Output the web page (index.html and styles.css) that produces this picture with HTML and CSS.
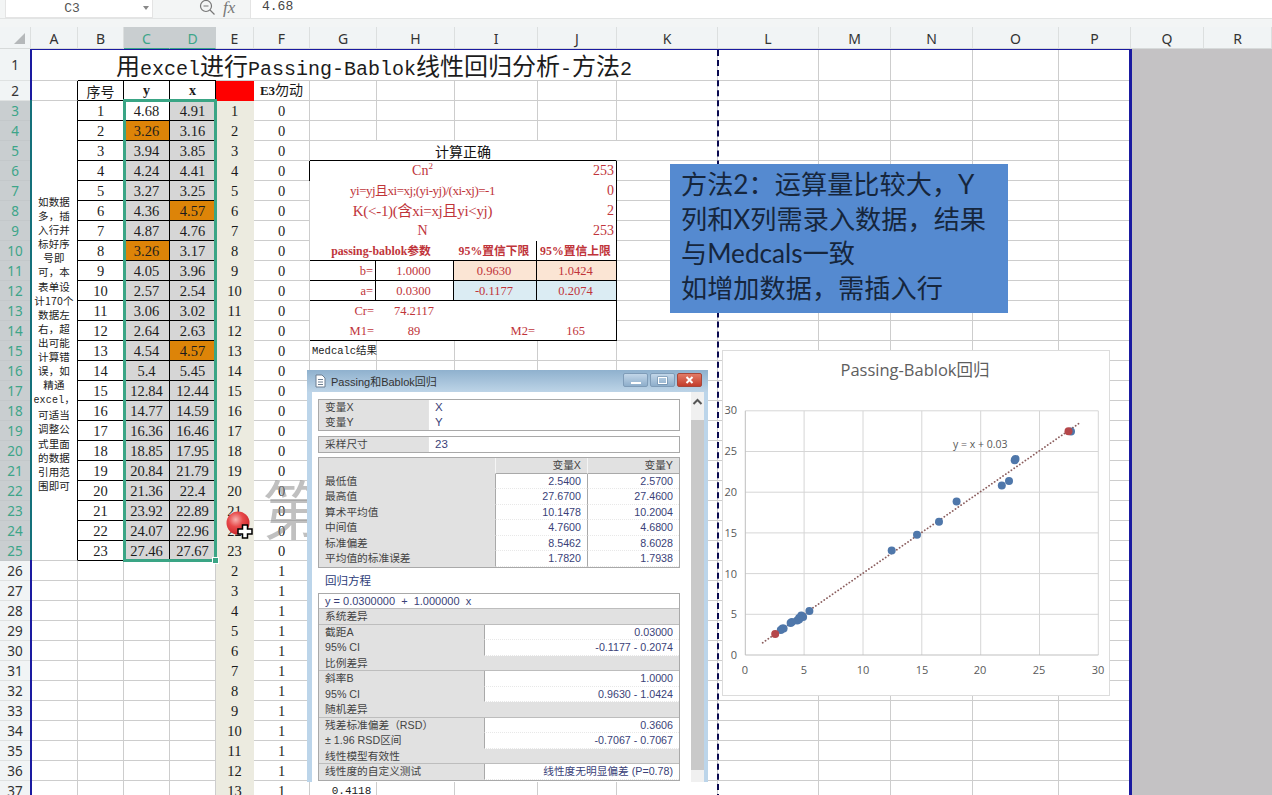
FILE: index.html
```html
<!DOCTYPE html>
<html lang="zh-CN">
<head>
<meta charset="utf-8">
<title>Passing-Bablok</title>
<link rel="stylesheet" href="styles.css">
</head>
<body>
<div class="fbar">
  <div class="fbar-top">
    <div class="namebox"><span class="nb-text">C3</span><span class="nb-caret"></span></div>
    <div class="fbar-icons">
      <svg class="zoom-ic" width="20" height="18" viewBox="0 0 20 18"><circle cx="8" cy="6" r="5.5" fill="none" stroke="#777" stroke-width="1.2"/><path d="M5.5 6h5M12 10l4.5 4.5" fill="none" stroke="#777" stroke-width="1.2"/></svg>
      <span class="fx">fx</span>
    </div>
    <div class="finput">4.68</div>
  </div>
  <div class="fbar-band"></div>
</div>

<table class="grid">
<colgroup>
<col class="w31"><col class="w47"><col class="w46"><col class="w46"><col class="w46"><col class="w38"><col class="w56"><col class="w67"><col class="w78"><col class="w83"><col class="w79"><col class="w101"><col class="w101"><col class="w72"><col class="w82"><col class="w86"><col class="w72"><col class="w73"><col class="w68">
</colgroup>
<thead>
<tr class="hd"><th class="corner"><span class="tri"></span></th><th>A</th><th>B</th><th class="csel">C</th><th class="csel">D</th><th>E</th><th>F</th><th>G</th><th>H</th><th>I</th><th>J</th><th>K</th><th>L</th><th>M</th><th>N</th><th>O</th><th>P</th><th>Q</th><th>R</th></tr>
</thead>
<tbody>
<tr class="r1"><th class="rh">1</th><td colspan="11" class="title">用<span class="lat">excel</span>进行<span class="lat">Passing-Bablok</span>线性回归分析<span class="lat">-</span>方法<span class="lat">2</span></td><td></td><td></td><td></td><td></td><td></td><td rowspan="37" colspan="2" class="off"></td></tr>
<tr><th class="rh">2</th><td class="edge"></td><td class="t cjk">序号</td><td class="t hb">y</td><td class="t hb">x</td><td class="red"></td><td class="f3"><b>E3</b>勿动</td><td></td><td></td><td></td><td></td><td></td><td></td><td></td><td></td><td></td><td></td></tr>
<tr><th class="rh sel">3</th><td rowspan="23" class="note edge">如数据<br>多，插<br>入行并<br>标好序<br>号即<br>可，本<br>表单设<br>计170个<br>数据左<br>右，超<br>出可能<br>计算错<br>误，如<br>精通<br><span class="nm">excel，</span><br>可适当<br>调整公<br>式里面<br>的数据<br>引用范<br>围即可</td><td class="t">1</td><td class="t">4.68</td><td class="t g">4.91</td><td class="e">1</td><td class="n">0</td><td></td><td></td><td></td><td></td><td></td><td></td><td></td><td></td><td></td><td></td></tr>
<tr><th class="rh sel">4</th><td class="t">2</td><td class="t o">3.26</td><td class="t g">3.16</td><td class="e">2</td><td class="n">0</td><td></td><td></td><td></td><td></td><td></td><td></td><td></td><td></td><td></td><td></td></tr>
<tr><th class="rh sel">5</th><td class="t">3</td><td class="t g">3.94</td><td class="t g">3.85</td><td class="e">3</td><td class="n">0</td><td colspan="4" class="calc-title">计算正确</td><td></td><td></td><td></td><td></td><td></td><td></td></tr>
<tr><th class="rh sel">6</th><td class="t">4</td><td class="t g">4.24</td><td class="t g">4.41</td><td class="e">4</td><td class="n">0</td><td colspan="4" rowspan="9" class="calc-box">
  <div class="calc">
    <div class="c3 s14">Cn<sup>2</sup></div><div class="rt s14">253</div>
    <div class="c3 s13n">yi=yj且xi=xj;(yi-yj)/(xi-xj)=-1</div><div class="rt s14">0</div>
    <div class="c3 s14k">K(&lt;-1)(含xi=xj且yi&lt;yj)</div><div class="rt s14">2</div>
    <div class="c3 s14">N</div><div class="rt s14">253</div>
    <div class="c2 hbold bb">passing-bablok参数</div><div class="hbold ctr br bb">95%置信下限</div><div class="hbold ctr bb">95%置信上限</div>
    <div class="rt v bb br">b=</div><div class="ctr v bb br">1.0000</div><div class="ctr v bb br pe">0.9630</div><div class="ctr v bb pe">1.0424</div>
    <div class="rt v bb br">a=</div><div class="ctr v bb br">0.0300</div><div class="ctr v bb br bl">-0.1177</div><div class="ctr v bb bl">0.2074</div>
    <div class="rt v">Cr=</div><div class="ctr v">74.2117</div><div></div><div></div>
    <div class="rt v">M1=</div><div class="ctr v">89</div><div class="rt v">M2=</div><div class="ctr v">165</div>
  </div>
</td><td></td><td></td><td></td><td></td><td></td><td></td></tr>
<tr><th class="rh sel">7</th><td class="t">5</td><td class="t g">3.27</td><td class="t g">3.25</td><td class="e">5</td><td class="n">0</td><td></td><td></td><td></td><td></td><td></td><td></td></tr>
<tr><th class="rh sel">8</th><td class="t">6</td><td class="t g">4.36</td><td class="t o">4.57</td><td class="e">6</td><td class="n">0</td><td></td><td></td><td></td><td></td><td></td><td></td></tr>
<tr><th class="rh sel">9</th><td class="t">7</td><td class="t g">4.87</td><td class="t g">4.76</td><td class="e">7</td><td class="n">0</td><td></td><td></td><td></td><td></td><td></td><td></td></tr>
<tr><th class="rh sel">10</th><td class="t">8</td><td class="t o">3.26</td><td class="t g">3.17</td><td class="e">8</td><td class="n">0</td><td></td><td></td><td></td><td></td><td></td><td></td></tr>
<tr><th class="rh sel">11</th><td class="t">9</td><td class="t g">4.05</td><td class="t g">3.96</td><td class="e">9</td><td class="n">0</td><td></td><td></td><td></td><td></td><td></td><td></td></tr>
<tr><th class="rh sel">12</th><td class="t">10</td><td class="t g">2.57</td><td class="t g">2.54</td><td class="e">10</td><td class="n">0</td><td></td><td></td><td></td><td></td><td></td><td></td></tr>
<tr><th class="rh sel">13</th><td class="t">11</td><td class="t g">3.06</td><td class="t g">3.02</td><td class="e">11</td><td class="n">0</td><td></td><td></td><td></td><td></td><td></td><td></td></tr>
<tr><th class="rh sel">14</th><td class="t">12</td><td class="t g">2.64</td><td class="t g">2.63</td><td class="e">12</td><td class="n">0</td><td></td><td></td><td></td><td></td><td></td><td></td></tr>
<tr><th class="rh sel">15</th><td class="t">13</td><td class="t g">4.54</td><td class="t o">4.57</td><td class="e">13</td><td class="n">0</td><td class="med">Medcalc结果</td><td></td><td></td><td></td><td></td><td></td><td></td><td></td><td></td><td></td></tr>
<tr><th class="rh sel">16</th><td class="t">14</td><td class="t g">5.4</td><td class="t g">5.45</td><td class="e">14</td><td class="n">0</td><td></td><td></td><td></td><td></td><td></td><td></td><td></td><td></td><td></td><td></td></tr>
<tr><th class="rh sel">17</th><td class="t">15</td><td class="t g">12.84</td><td class="t g">12.44</td><td class="e">15</td><td class="n">0</td><td></td><td></td><td></td><td></td><td></td><td></td><td></td><td></td><td></td><td></td></tr>
<tr><th class="rh sel">18</th><td class="t">16</td><td class="t g">14.77</td><td class="t g">14.59</td><td class="e">16</td><td class="n">0</td><td></td><td></td><td></td><td></td><td></td><td></td><td></td><td></td><td></td><td></td></tr>
<tr><th class="rh sel">19</th><td class="t">17</td><td class="t g">16.36</td><td class="t g">16.46</td><td class="e">17</td><td class="n">0</td><td></td><td></td><td></td><td></td><td></td><td></td><td></td><td></td><td></td><td></td></tr>
<tr><th class="rh sel">20</th><td class="t">18</td><td class="t g">18.85</td><td class="t g">17.95</td><td class="e">18</td><td class="n">0</td><td></td><td></td><td></td><td></td><td></td><td></td><td></td><td></td><td></td><td></td></tr>
<tr><th class="rh sel">21</th><td class="t">19</td><td class="t g">20.84</td><td class="t g">21.79</td><td class="e">19</td><td class="n">0</td><td></td><td></td><td></td><td></td><td></td><td></td><td></td><td></td><td></td><td></td></tr>
<tr><th class="rh sel">22</th><td class="t">20</td><td class="t g">21.36</td><td class="t g">22.4</td><td class="e">20</td><td class="n">0</td><td></td><td></td><td></td><td></td><td></td><td></td><td></td><td></td><td></td><td></td></tr>
<tr><th class="rh sel">23</th><td class="t">21</td><td class="t g">23.92</td><td class="t g">22.89</td><td class="e">21</td><td class="n">0</td><td></td><td></td><td></td><td></td><td></td><td></td><td></td><td></td><td></td><td></td></tr>
<tr><th class="rh sel">24</th><td class="t">22</td><td class="t g">24.07</td><td class="t g">22.96</td><td class="e">22</td><td class="n">0</td><td></td><td></td><td></td><td></td><td></td><td></td><td></td><td></td><td></td><td></td></tr>
<tr><th class="rh sel">25</th><td class="t">23</td><td class="t g">27.46</td><td class="t g">27.67</td><td class="e">23</td><td class="n">0</td><td></td><td></td><td></td><td></td><td></td><td></td><td></td><td></td><td></td><td></td></tr>
<tr><th class="rh">26</th><td></td><td></td><td></td><td></td><td class="e">2</td><td class="n">1</td><td></td><td></td><td></td><td></td><td></td><td></td><td></td><td></td><td></td><td></td></tr>
<tr><th class="rh">27</th><td></td><td></td><td></td><td></td><td class="e">3</td><td class="n">1</td><td></td><td></td><td></td><td></td><td></td><td></td><td></td><td></td><td></td><td></td></tr>
<tr><th class="rh">28</th><td></td><td></td><td></td><td></td><td class="e">4</td><td class="n">1</td><td></td><td></td><td></td><td></td><td></td><td></td><td></td><td></td><td></td><td></td></tr>
<tr><th class="rh">29</th><td></td><td></td><td></td><td></td><td class="e">5</td><td class="n">1</td><td></td><td></td><td></td><td></td><td></td><td></td><td></td><td></td><td></td><td></td></tr>
<tr><th class="rh">30</th><td></td><td></td><td></td><td></td><td class="e">6</td><td class="n">1</td><td></td><td></td><td></td><td></td><td></td><td></td><td></td><td></td><td></td><td></td></tr>
<tr><th class="rh">31</th><td></td><td></td><td></td><td></td><td class="e">7</td><td class="n">1</td><td></td><td></td><td></td><td></td><td></td><td></td><td></td><td></td><td></td><td></td></tr>
<tr><th class="rh">32</th><td></td><td></td><td></td><td></td><td class="e">8</td><td class="n">1</td><td></td><td></td><td></td><td></td><td></td><td></td><td></td><td></td><td></td><td></td></tr>
<tr><th class="rh">33</th><td></td><td></td><td></td><td></td><td class="e">9</td><td class="n">1</td><td></td><td></td><td></td><td></td><td></td><td></td><td></td><td></td><td></td><td></td></tr>
<tr><th class="rh">34</th><td></td><td></td><td></td><td></td><td class="e">10</td><td class="n">1</td><td></td><td></td><td></td><td></td><td></td><td></td><td></td><td></td><td></td><td></td></tr>
<tr><th class="rh">35</th><td></td><td></td><td></td><td></td><td class="e">11</td><td class="n">1</td><td></td><td></td><td></td><td></td><td></td><td></td><td></td><td></td><td></td><td></td></tr>
<tr><th class="rh">36</th><td></td><td></td><td></td><td></td><td class="e">12</td><td class="n">1</td><td></td><td></td><td></td><td></td><td></td><td></td><td></td><td></td><td></td><td></td></tr>
<tr><th class="rh">37</th><td></td><td></td><td></td><td></td><td class="e">13</td><td class="n">1</td><td class="tail">0.4118</td><td></td><td></td><td></td><td></td><td></td><td></td><td></td><td></td><td></td></tr>
</tbody>
</table>

<div class="print-area"></div>
<div class="sel-edge"></div>
<div class="page-break"></div>
<div class="selection"><span class="handle"></span></div>
<div class="watermark">第</div>

<div class="textbox">方法2：运算量比较大，Y<br>列和X列需录入数据，结果<br>与Medcals一致<br>如增加数据，需插入行</div>

<section class="dlg">
  <header class="dlg-title">
    <svg width="11" height="14" viewBox="0 0 11 14"><path d="M1 1h6l3 3v9H1z" fill="#fff" stroke="#6c7f92"/><path d="M3 5.500h5M3 8h5M3 10.500h5" stroke="#6c7f92"/></svg>
    <span class="dlg-name">Passing和Bablok回归</span>
    <div class="wbtns">
      <span class="wb"><i class="ic-min"></i></span>
      <span class="wb"><i class="ic-max"></i></span>
      <span class="wb wclose"><svg width="9" height="8" viewBox="0 0 9 8"><path d="M1.500 1l6 6M7.500 1l-6 6" stroke="#fff" stroke-width="2"/></svg></span>
    </div>
  </header>
  <div class="dlg-body">
    <div class="dlg-main">
      <div class="dt kv">
        <div class="lb">变量X</div><div class="val">X</div>
        <div class="lb">变量Y</div><div class="val">Y</div>
      </div>
      <div class="dt kv gap4">
        <div class="lb">采样尺寸</div><div class="val">23</div>
      </div>
      <div class="dt st">
        <div class="lb"></div><div class="lb rgt head">变量X</div><div class="lb rgt head">变量Y</div>
        <div class="lb">最低值</div><div class="num">2.5400</div><div class="num">2.5700</div>
        <div class="lb">最高值</div><div class="num">27.6700</div><div class="num">27.4600</div>
        <div class="lb">算术平均值</div><div class="num">10.1478</div><div class="num">10.2004</div>
        <div class="lb">中间值</div><div class="num">4.7600</div><div class="num">4.6800</div>
        <div class="lb">标准偏差</div><div class="num">8.5462</div><div class="num">8.6028</div>
        <div class="lb">平均值的标准误差</div><div class="num">1.7820</div><div class="num">1.7938</div>
      </div>
      <h3 class="dlg-h">回归方程</h3>
      <div class="dt reg">
        <div class="wide eq">y = 0.0300000 &nbsp;+ &nbsp;1.000000 &nbsp;x</div>
        <div class="wide lb">系统差异</div>
        <div class="lb">截距A</div><div class="num">0.03000</div>
        <div class="lb">95% CI</div><div class="num">-0.1177 - 0.2074</div>
        <div class="wide lb">比例差异</div>
        <div class="lb">斜率B</div><div class="num">1.0000</div>
        <div class="lb">95% CI</div><div class="num">0.9630 - 1.0424</div>
        <div class="wide lb">随机差异</div>
        <div class="lb">残差标准偏差（RSD）</div><div class="num">0.3606</div>
        <div class="lb">± 1.96 RSD区间</div><div class="num">-0.7067 - 0.7067</div>
        <div class="wide lb">线性模型有效性</div>
        <div class="lb">线性度的自定义测试</div><div class="num">线性度无明显偏差 (P=0.78)</div>
      </div>
    </div>
    <div class="dlg-scroll">
      <svg width="13" height="20" viewBox="0 0 13 20"><path d="M2.500 12l4-4 4 4" fill="none" stroke="#555" stroke-width="2"/></svg>
      <div class="thumb"></div>
    </div>
  </div>
</section>

<svg class="chart" width="388" height="346" viewBox="722 350 388 346">
  <rect x="722.500" y="350.500" width="387" height="345" fill="#fff" stroke="#dcdcdc"/>
  <text x="915" y="376" class="ch-title" text-anchor="middle">Passing-Bablok回归</text>
  <g stroke="#d6d6d6" fill="none">
    <path d="M804.100 410.800V655M863 410.800V655M921.800 410.800V655M980.700 410.800V655M1039.500 410.800V655M1098.300 410.800V655"/>
    <path d="M745.300 410.800H1098.300M745.300 451.500H1098.300M745.300 492.200H1098.300M745.300 532.900H1098.300M745.300 573.600H1098.300M745.300 614.300H1098.300"/>
    <path d="M745.300 410.800V655H1098.300" stroke="#bfbfbf"/>
  </g>
  <g class="ch-y" text-anchor="end">
    <text x="737" y="414">30</text><text x="737" y="455">25</text><text x="737" y="496">20</text><text x="737" y="537">15</text><text x="737" y="578">10</text><text x="737" y="618">5</text><text x="737" y="659">0</text>
  </g>
  <g class="ch-y" text-anchor="middle">
    <text x="745" y="674">0</text><text x="804" y="674">5</text><text x="863" y="674">10</text><text x="922" y="674">15</text><text x="980" y="674">20</text><text x="1039" y="674">25</text><text x="1098" y="674">30</text>
  </g>
  <path d="M762.700 642.700L1080 422.700" stroke="#8b5e5e" stroke-width="1.800" stroke-linecap="round" stroke-dasharray="0.100 3.300" fill="none"/>
  <text x="953" y="448" class="ch-eq">y = x + 0.03</text>
  <g fill="#4f77aa">
    <circle cx="803.100" cy="616.900" r="4"/><circle cx="782.500" cy="628.500" r="4"/><circle cx="790.600" cy="622.900" r="4"/><circle cx="797.200" cy="620.500" r="4"/><circle cx="783.600" cy="628.400" r="4"/><circle cx="799.100" cy="619.500" r="4"/><circle cx="801.300" cy="615.400" r="4"/><circle cx="791.900" cy="622" r="4"/><circle cx="780.800" cy="630.100" r="4"/><circle cx="799.100" cy="618" r="4"/><circle cx="809.400" cy="611" r="4"/><circle cx="891.700" cy="550.500" r="4"/><circle cx="917" cy="534.800" r="4"/><circle cx="939" cy="521.800" r="4"/><circle cx="956.600" cy="501.600" r="4"/><circle cx="1001.800" cy="485.400" r="4"/><circle cx="1009" cy="481.100" r="4"/><circle cx="1014.700" cy="460.300" r="4"/><circle cx="1015.500" cy="459.100" r="4"/><circle cx="1071" cy="431.500" r="4"/>
  </g>
  <g fill="#b5474a"><circle cx="775.200" cy="634.100" r="4"/><circle cx="1068.500" cy="431.300" r="4"/></g>
</svg>

<svg class="pointer" width="32" height="34" viewBox="0 0 32 34">
  <defs><radialGradient id="ball" cx="0.400" cy="0.350" r="0.700"><stop offset="0" stop-color="#f7b3b0"/><stop offset="0.450" stop-color="#e8494a"/><stop offset="1" stop-color="#c8242a"/></radialGradient></defs>
  <circle cx="12" cy="12" r="11.500" fill="url(#ball)"/>
  <path d="M16.500 14h5v4h4.500v5h-4.500v4h-5v-4h-4.500v-5h4.500z" fill="#fff" stroke="#000" stroke-width="1.500"/>
</svg>
</body>
</html>
```
FILE: styles.css
```css
* { box-sizing: border-box; }
html, body { margin: 0; padding: 0; }
body {
  position: relative;
  width: 1272px;
  height: 795px;
  overflow: hidden;
  background: #fff;
  font-family: "Liberation Serif", "Noto Sans CJK SC", serif;
  color: #1a1a1a;
}

/* formula bar */
.fbar { height: 27px; display: flex; flex-direction: column; background: #f3f5f5; }
.fbar-top { height: 19px; display: flex; border-bottom: 1px solid #e2e4e4; }
.fbar-band { flex: 1; }
.namebox {
  width: 148px; margin-left: 5px; background: #fff;
  border: solid #e4e4e4; border-width: 0 1px 1px 1px;
  position: relative; display: flex; align-items: center; justify-content: center;
}
.nb-text { font: 13px "Liberation Mono", monospace; color: #555; padding-right: 14px; }
.nb-caret {
  position: absolute; right: 3px; top: 6px; width: 0; height: 0;
  border: 3px solid transparent; border-top: 4px solid #888;
}
.fbar-icons { width: 97px; display: flex; align-items: flex-start; padding-left: 45px; gap: 5px; }
.zoom-ic { margin-top: 0; }
.fx { font: italic 17px/15px "Liberation Serif", serif; color: #777; }
.finput {
  flex: 1; background: #fff; border-left: 1px solid #e4e4e4;
  font: 13px/14px "Liberation Mono", monospace; color: #444; padding-left: 11px;
}

/* sheet */
.grid { table-layout: fixed; border-collapse: separate; border-spacing: 0; width: 1272px; }
.w31 { width: 31px; } .w47 { width: 47px; } .w46 { width: 46px; } .w38 { width: 38px; }
.w56 { width: 56px; } .w67 { width: 67px; } .w78 { width: 78px; } .w83 { width: 83px; }
.w79 { width: 79px; } .w101 { width: 101px; } .w72 { width: 72px; } .w82 { width: 82px; }
.w86 { width: 86px; } .w73 { width: 73px; } .w68 { width: 68px; }

.grid tr { height: 20px; }
.grid tr.hd { height: 22px; }
.grid tr.r1 { height: 32px; }
.grid td, .grid th {
  padding: 0; overflow: hidden; white-space: nowrap; text-align: center;
  border: solid #cdcdcd; border-width: 0 1px 1px 0;
  line-height: 19px; font-size: 14.500px; font-weight: 400;
}
.grid td.t, .grid td.e, .grid td.n { padding-top: 1px; line-height: 18px; }
.hd th {
  background: #f1f4f5; font: 400 14px/18px "Noto Sans", sans-serif; color: #333;
  border-bottom-color: #d7dada; border-right-color: #dcdfdf; padding-top: 3px;
}
.hd th.csel { background: #c9ced0; color: #3da589; border-right-color: #c9ced0; border-bottom-color: #3da589; }
th.corner { position: relative; }
.tri {
  position: absolute; left: 14px; top: 6px; width: 0; height: 0;
  border-left: 11px solid transparent; border-bottom: 11px solid #b5b8ba;
}
.grid th.rh {
  background: #f1f4f5; font: 400 13.500px/18px "Noto Sans", sans-serif; color: #333;
  border-bottom-color: #dfe2e2; border-right-color: #e0e3e3; text-align: center;
}
.grid th.rh.sel { background: #c9ced0; color: #3da589; border-bottom-color: #c3c8ca; border-right-color: #c9ced0; }

.grid td.title {
  font: 400 24px/28px "Noto Sans CJK SC", sans-serif; color: #1c1c1c; vertical-align: top; padding-top: 2px;
}
.lat { font: 20px/20px "Liberation Mono", monospace; }
.edge { border-right-color: #000 !important; }
.t {
  border-color: #000 !important; color: #1c1c1c;
  box-shadow: 0 -1px 0 #000;
}
.grid td.cjk { font: 14px/16px "Noto Sans CJK SC", sans-serif; padding: 0; }
.grid td.hb { font-weight: 700; font-size: 14px; }
.g { background: #d6d6d6; }
.o { background: #dd8408; }
.red { background: #ff0000; border-color: #ff0000 !important; }
.grid td.f3 { font: 14px/14px "Liberation Serif", "Noto Sans CJK SC", sans-serif; }
.f3 b { font-size: 13px; }
.e { background: #ecebe0; border-color: #ecebe0 !important; }
.grid td.note {
  vertical-align: top; padding-top: 94px; white-space: normal;
  font: 10.500px/14.100px "Noto Sans CJK SC", sans-serif; color: #222;
  letter-spacing: .2px;
}
.nm { font: 10px/14px "Liberation Mono", "Noto Sans CJK SC", monospace; }
.off { background: #c4c2c4; border: 0 !important; }
.grid td.calc-title { font: 14px/16px "Noto Sans CJK SC", sans-serif; color: #111; border-right-color: transparent; border-bottom-color: #000; }
.calc-box { padding: 0; border-color: #000 !important; box-shadow: -1px 0 0 #000; vertical-align: top; }
.calc {
  display: grid; grid-template-columns: 66px 78px 83px 79px; grid-auto-rows: 20px; height: 179px; overflow: hidden;
  color: #c0343a; font-family: "Liberation Serif", "Noto Sans CJK SC", serif;
}
.calc > div { line-height: 18px; padding: 1px 2px 0 0; white-space: nowrap; }
.c3 { grid-column: span 3; text-align: center; }
.c2 { grid-column: span 2; text-align: center; }
.rt { text-align: right; }
.ctr { text-align: center; }
.s14 { font-size: 14px; }
.s13n { font-size: 13px; letter-spacing: -.5px; }
.s14k { font-size: 15px; letter-spacing: -.3px; }
.c3 sup { font-size: 9px; line-height: 0; }
.hbold { font-size: 11.800px; font-weight: 700; }
.v { font-size: 12.500px; }
.bb { border-bottom: 1px solid #000; }
.br { border-right: 1px solid #000; }
.pe { background: #fbe5d4; }
.bl { background: #dbecf3; }
.grid td.med { font: 10.500px/16px "Liberation Mono", "Noto Sans CJK SC", monospace; text-align: left; padding-left: 2px; overflow: visible; }
.grid td.tail { font: 11px/16px "Liberation Mono", monospace; padding: 0 0 0 17px; }

/* overlays on the sheet */
.print-area {
  position: absolute; left: 30px; top: 49px; width: 1102px; height: 760px;
  border: solid #1a1aa0; border-width: 1.500px 3px 0 2px; pointer-events: none;
}
.sel-edge { position: absolute; left: 30px; top: 100px; width: 2px; height: 460px; background: #14707a; }
.page-break { position: absolute; left: 717px; top: 50px; height: 760px; border-left: 2px dashed #0a0a50; }
.selection {
  position: absolute; left: 123px; top: 99px; width: 94px; height: 463px;
  border: 3px solid #3aa585;
}
.handle {
  position: absolute; right: -5px; bottom: -5px; width: 7px; height: 7px;
  background: #3aa585; border: 1px solid #fff;
}
.watermark {
  position: absolute; left: 262px; top: 466px;
  font: 64px/80px "Noto Sans CJK SC", sans-serif; color: rgba(140, 140, 140, .55);
}
.textbox {
  position: absolute; left: 670px; top: 164px; width: 338px; height: 149px;
  background: #558ad0; color: #16263c; padding: 3px 0 0 11px;
  font: 26.200px/34.500px Lato, "Noto Sans CJK SC", sans-serif; white-space: nowrap;
}

/* dialog */
.dlg {
  position: absolute; left: 307px; top: 370px; width: 401px; height: 412px;
  background: #bcd5ea; padding: 0 4px 0 5px; display: flex; flex-direction: column;
  font-family: "Liberation Sans", "Noto Sans CJK SC", sans-serif; font-size: 10.700px;
  color: #333;
}
.dlg-title {
  height: 22px; margin: 0 -4px 0 -5px; padding: 0 6px 0 8px; display: flex; align-items: center; gap: 5px;
  background: linear-gradient(#8fb1ce, #bdd4e7);
}
.dlg-name { flex: 1; font-size: 11px; color: #333; }
.wbtns { display: flex; gap: 2px; margin-top: -2px; }
.wb {
  width: 25px; height: 14px; display: flex; align-items: center; justify-content: center;
  background: linear-gradient(#c2d6e8, #8eaecb); border: 1px solid #7f9cb8; border-radius: 2px;
}
.wclose { background: linear-gradient(#e27b66, #c33d2c); border-color: #a7473a; }
.ic-min { display: block; width: 10px; height: 2px; margin-top: 5px; background: #fff; border: 0; }
.ic-max { display: block; width: 9px; height: 7px; background: transparent; border: 1.500px solid #fff; box-shadow: 0 0 0 .5px #5f7f9c; }
.dlg-body { flex: 1; display: flex; background: #fff; min-height: 0; overflow: hidden; }
.dlg-main { padding: 7px 0 0 6px; flex: none; width: 379px; }
.dlg-scroll { width: 13px; background: #f0f0f0; flex: none; display: flex; flex-direction: column; }
.thumb { height: 350px; margin-top: 8px; background: #c9c9c9; }
.dt { border: 1px solid #a9a9a9; margin-bottom: 5px; display: grid; width: 362px; grid-auto-rows: 15.500px; }
.dt.gap4 { margin-bottom: 4px; }
.dt > div { line-height: 15px; white-space: nowrap; padding: 0 6px; }
.kv { grid-template-columns: 109px 1fr; grid-auto-rows: 15px; }
.kv .val { color: #3a3f78; font-size: 11.500px; border-left: 1px solid #e3e3e3; }
.st { grid-template-columns: 176px 92px 92px; }
.reg { grid-template-columns: 165px 195px; }
.lb { background: #e1e1e1; color: #444; }
.rgt, .num { text-align: right; }
.head { border-bottom: 1px solid #a9a9a9; border-left: 1px solid #f5f5f5; }
.num { color: #3a3f78; border-left: 1px solid #a9a9a9; border-bottom: 1px dotted #e8e8e8; }
.wide { grid-column: 1 / -1; }
.eq { color: #3a3f78; font-size: 11px; background: #fff; border-bottom: 1px solid #bdbdbd; }
.reg .wide.lb { border-bottom: 1px solid #bdbdbd; }
.dlg-h { margin: 0; height: 20px; padding: 1px 0 0 7px; font-size: 11.500px; font-weight: 400; line-height: 15px; color: #2c3c78; }

/* chart */
.chart { position: absolute; left: 722px; top: 350px; }
.ch-title { font: 16.500px "Open Sans", "Noto Sans CJK SC", sans-serif; fill: #5e5e5e; }
.ch-y text, .ch-eq { font: 11px "Open Sans", sans-serif; fill: #595959; }
.ch-eq { font-size: 10.500px; }

.pointer { position: absolute; left: 226px; top: 511px; }
```
